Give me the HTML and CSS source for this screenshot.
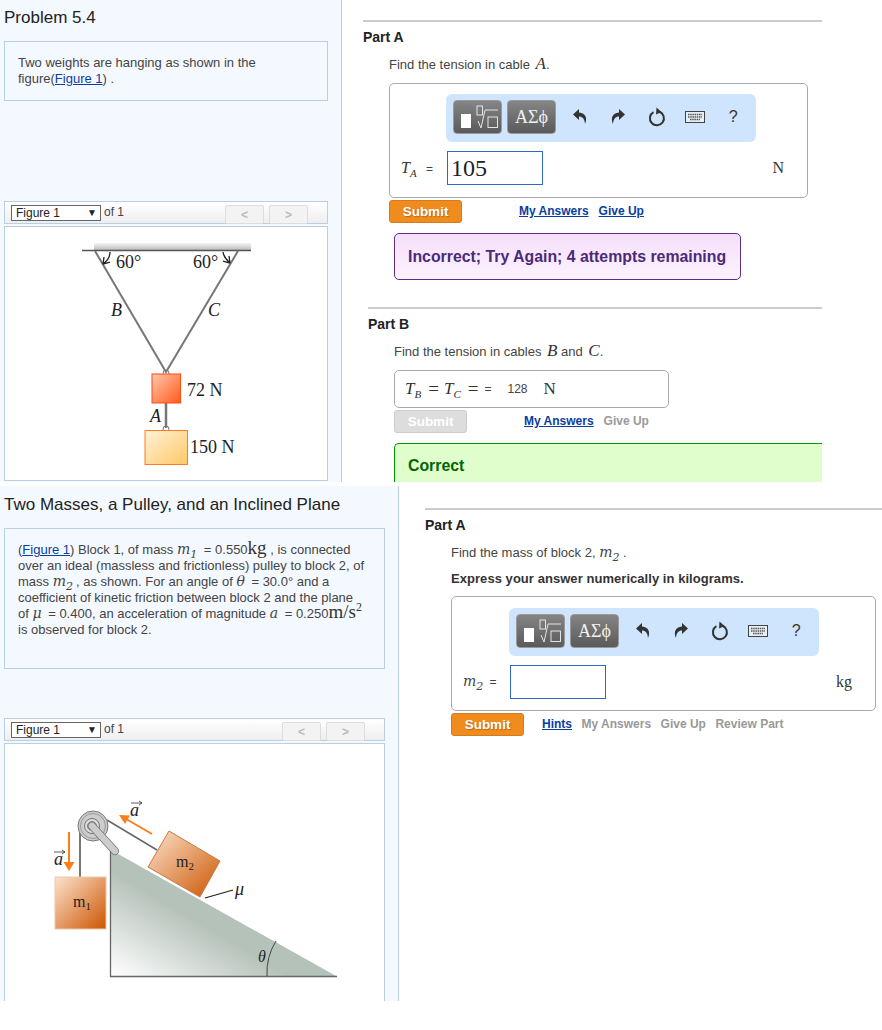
FILE: index.html
```html
<!DOCTYPE html>
<html lang="en">
<head>
    <meta charset="UTF-8" />
    <title>Problem 5.4</title>
    <link rel="stylesheet" href="styles.css">
</head>
<body>
    <!-- first problem -->
    <section class="problem problem-one">
        <div class="side">
            <h1 class="title">Problem 5.4</h1>
            <div class="intro">Two weights are hanging as shown in the<br>figure(<a href="#">Figure 1</a>) .</div>
            <div class="fig-bar">
                <div class="fig-select">Figure 1<span class="fig-arrow">▼</span></div>
                <span class="fig-of">of 1</span>
                <div class="fig-nav">
                    <button class="fig-btn">&lt;</button>
                    <button class="fig-btn">&gt;</button>
                </div>
            </div>
            <div class="fig-box">
                <svg class="fig-svg" width="322" height="253" viewBox="5 227 322 253">
                    <defs>
                        <linearGradient id="ceil" x1="0" y1="0" x2="0" y2="1">
                            <stop offset="0" stop-color="#f4f4f4"/>
                            <stop offset="1" stop-color="#bdbdbd"/>
                        </linearGradient>
                        <linearGradient id="redBox" x1="0" y1="0" x2="1" y2="1">
                            <stop offset="0" stop-color="#ffc9ac"/>
                            <stop offset="1" stop-color="#ff5a1c"/>
                        </linearGradient>
                        <linearGradient id="yelBox" x1="0" y1="0" x2="1" y2="1">
                            <stop offset="0" stop-color="#fff2da"/>
                            <stop offset="1" stop-color="#ffc866"/>
                        </linearGradient>
                    </defs>
                    <rect x="94" y="243" width="157" height="7" fill="url(#ceil)"/>
                    <line x1="82" y1="250.5" x2="251" y2="250.5" stroke="#555" stroke-width="1.5"/>
                    <path d="M95 251 L166 372 L238 251" fill="none" stroke="#777" stroke-width="2"/>
                    <line x1="166" y1="403" x2="166" y2="428" stroke="#777" stroke-width="2.500"/>
                    <circle cx="166" cy="373" r="3" fill="none" stroke="#777"/>
                    <circle cx="166" cy="429" r="3" fill="none" stroke="#777"/>
                    <path d="M110 252 Q110 259 103 264 M103 264 L104 257 M103 264 L110 262" fill="none" stroke="#222" stroke-width="1.3"/>
                    <path d="M223 252 Q224 258 230 263 M230 263 L229 256 M230 263 L223 261" fill="none" stroke="#222" stroke-width="1.3"/>
                    <rect x="152" y="374" width="28.500" height="29" fill="url(#redBox)" stroke="#ff4d10"/>
                    <rect x="145" y="430.500" width="42.500" height="34" fill="url(#yelBox)" stroke="#ff7a20"/>
                    <text class="fig-text" x="116" y="268">60°</text>
                    <text class="fig-text" x="193" y="268">60°</text>
                    <text class="fig-text fig-it" x="111" y="316">B</text>
                    <text class="fig-text fig-it" x="208" y="316">C</text>
                    <text class="fig-text" x="187" y="396">72 N</text>
                    <text class="fig-text fig-it" x="150" y="422">A</text>
                    <text class="fig-text" x="190" y="453">150 N</text>
                </svg>
            </div>
        </div>
        <div class="main">
            <div class="part part-first">
                <h2 class="part-name">Part A</h2>
                <div class="part-body">
                    <p class="question">Find the tension in cable <i class="math">A</i>.</p>
                    <div class="answer">
                        <div class="toolbar">
                            <button class="tool tool-dark">
                                <svg width="47" height="32" viewBox="0 0 47 32">
                                    <rect x="7" y="13" width="10" height="14" fill="#fff"/>
                                    <rect x="23" y="5" width="5.500" height="9" fill="none" stroke="#e4e4e4"/>
                                    <path d="M24 20 L27 27 L31 9 H44" fill="none" stroke="#e4e4e4"/>
                                    <rect x="34" y="16" width="9.500" height="10.500" fill="none" stroke="#e4e4e4"/>
                                </svg>
                            </button>
                            <button class="tool tool-dark tool-greek">ΑΣϕ</button>
                            <div class="tool-icons">
                                <svg width="16" height="18" viewBox="0 0 16 18"><path d="M7 1 L1 6.500 L7 12 V8.500 C10.500 8.500 12.500 10.500 13 16 C15.500 10.500 14 5 7 4.500 Z" fill="#333"/></svg>
                                <svg width="16" height="18" viewBox="0 0 16 18"><path d="M9 1 L15 6.500 L9 12 V8.500 C5.500 8.500 3.500 10.500 3 16 C0.500 10.500 2 5 9 4.500 Z" fill="#333"/></svg>
                                <svg width="18" height="20" viewBox="0 0 18 20"><path d="M11.500 4.800 A7 7 0 1 1 5.500 5.200" fill="none" stroke="#333" stroke-width="2"/><path d="M8.500 0.500 L13.500 5 L8 7.500 Z" fill="#333"/></svg>
                                <svg width="20" height="12" viewBox="0 0 20 12"><rect x="0.500" y="0.500" width="19" height="11" fill="#e8eef6" stroke="#444"/><path d="M3 3.500 H17 M3 6 H17 M5 8.500 H15" stroke="#555" stroke-width="1.500" stroke-dasharray="1.500 .7"/></svg>
                                <span class="tool-help">?</span>
                            </div>
                        </div>
                        <div class="answer-row">
                            <span class="answer-label"><i class="math-t">T<sub>A</sub></i> =</span>
                            <div class="answer-input">105</div>
                            <span class="answer-unit">N</span>
                        </div>
                    </div>
                    <div class="actions">
                        <button class="submit">Submit</button>
                        <div class="links links-wide">
                            <a href="#">My Answers</a>
                            <a href="#">Give Up</a>
                        </div>
                    </div>
                    <div class="feedback feedback-bad">Incorrect; Try Again; 4 attempts remaining</div>
                </div>
            </div>
            <div class="part part-second">
                <h2 class="part-name">Part B</h2>
                <div class="part-body">
                    <p class="question">Find the tension in cables <i class="math">B</i> and <i class="math">C</i>.</p>
                    <div class="answered">
                        <i class="math-big">T<sub>B</sub></i>
                        <span class="rel">=</span>
                        <i class="math-big">T<sub>C</sub></i>
                        <span class="rel rel-last">=</span>
                        <span class="answered-eq">=</span>
                        <span class="answered-val">128</span>
                        <span class="answered-unit">N</span>
                    </div>
                    <div class="actions">
                        <button class="submit submit-off">Submit</button>
                        <div class="links links-wide">
                            <a href="#">My Answers</a>
                            <span class="link-off">Give Up</span>
                        </div>
                    </div>
                    <div class="feedback feedback-good">Correct</div>
                </div>
            </div>
        </div>
    </section>

    <!-- second problem -->
    <section class="problem problem-two">
        <div class="side">
            <h1 class="title">Two Masses, a Pulley, and an Inclined Plane</h1>
            <div class="intro">(<a href="#">Figure 1</a>) Block 1, of mass <i class="math-m">m<sub>1</sub></i> = 0.550<span class="unit">kg</span> , is connected<br>over an ideal (massless and frictionless) pulley to block 2, of<br>mass <i class="math-m">m<sub>2</sub></i>, as shown. For an angle of <i class="math-m">θ</i> = 30.0° and a<br>coefficient of kinetic friction between block 2 and the plane<br>of <i class="math-m">μ</i> = 0.400, an acceleration of magnitude <i class="math-m">a</i> = 0.250<span class="unit">m/s<sup>2</sup></span><br>is observed for block 2.</div>
            <div class="fig-bar">
                <div class="fig-select">Figure 1<span class="fig-arrow">▼</span></div>
                <span class="fig-of">of 1</span>
                <div class="fig-nav">
                    <button class="fig-btn">&lt;</button>
                    <button class="fig-btn">&gt;</button>
                </div>
            </div>
            <div class="fig-box">
                <svg class="fig-svg" width="379" height="257" viewBox="5 744 379 257">
                    <defs>
                        <linearGradient id="block" x1="0" y1="0" x2="1" y2="1">
                            <stop offset="0" stop-color="#fde3cf"/>
                            <stop offset="1" stop-color="#cc5500"/>
                        </linearGradient>
                        <linearGradient id="ramp" gradientUnits="userSpaceOnUse" x1="111" y1="976" x2="157" y2="898">
                            <stop offset="0" stop-color="#ffffff"/>
                            <stop offset="1" stop-color="#b5c2ba"/>
                        </linearGradient>
                    </defs>
                    <path d="M111 850 L337 976.500 H111 Z" fill="url(#ramp)"/>
                    <path d="M110.500 850 V976.500 H337" fill="none" stroke="#666" stroke-width="1.300"/>
                    <line x1="80" y1="830" x2="80" y2="877" stroke="#777" stroke-width="2"/>
                    <line x1="107" y1="820" x2="157" y2="850" stroke="#666" stroke-width="1.500"/>
                    <circle cx="93" cy="826" r="15" fill="#ccc" stroke="#777"/>
                    <circle cx="93" cy="826" r="12.500" fill="none" stroke="#999"/>
                    <circle cx="92" cy="826" r="7.500" fill="#ddd" stroke="#777"/>
                    <circle cx="92" cy="826" r="4.500" fill="none" stroke="#777"/>
                    <line x1="92" y1="826" x2="115" y2="851" stroke="#777" stroke-width="8" stroke-linecap="round"/>
                    <line x1="92" y1="826" x2="115" y2="851" stroke="#ccc" stroke-width="6.500" stroke-linecap="round"/>
                    <rect x="55" y="877" width="51" height="52" fill="url(#block)" stroke="#ecc9ae"/>
                    <path d="M169 831 L220 861 L200 897 L148 867 Z" fill="url(#block)" stroke="#c97a40"/>
                    <path d="M69 832 V864" stroke="#fb7d1c" stroke-width="2"/>
                    <path d="M63.500 862 H74.500 L69 871 Z" fill="#fb7d1c"/>
                    <path d="M152 834 L127 819.500" stroke="#fb7d1c" stroke-width="2"/>
                    <path d="M119 815 L130 815.500 L125 824 Z" fill="#fb7d1c"/>
                    <path d="M205 898 L233 890" stroke="#222" stroke-width="1.200"/>
                    <path d="M276 941 Q266 957 267 976" fill="none" stroke="#444"/>
                    <text class="fig-text fig-small" x="73" y="907">m<tspan class="fig-sub" dy="3">1</tspan></text>
                    <text class="fig-text fig-small" x="176" y="867">m<tspan class="fig-sub" dy="3">2</tspan></text>
                    <text class="fig-text fig-it" x="54" y="865">a</text>
                    <text class="fig-text fig-it" x="130" y="816">a</text>
                    <path d="M54 852 H65 M62 850 L65 852 L62 854" fill="none" stroke="#333" stroke-width=".8"/>
                    <path d="M131 803 H142 M139 801 L142 803 L139 805" fill="none" stroke="#333" stroke-width=".8"/>
                    <text class="fig-text fig-it" x="235" y="895">μ</text>
                    <text class="fig-text fig-it fig-small" x="258" y="962">θ</text>
                </svg>
            </div>
        </div>
        <div class="main">
            <div class="part part-third">
                <h2 class="part-name">Part A</h2>
                <div class="part-body">
                    <p class="question">Find the mass of block 2, <i class="math-m">m<sub>2</sub></i> .</p>
                    <p class="express">Express your answer numerically in kilograms.</p>
                    <div class="answer">
                        <div class="toolbar">
                            <button class="tool tool-dark">
                                <svg width="47" height="32" viewBox="0 0 47 32">
                                    <rect x="7" y="13" width="10" height="14" fill="#fff"/>
                                    <rect x="23" y="5" width="5.500" height="9" fill="none" stroke="#e4e4e4"/>
                                    <path d="M24 20 L27 27 L31 9 H44" fill="none" stroke="#e4e4e4"/>
                                    <rect x="34" y="16" width="9.500" height="10.500" fill="none" stroke="#e4e4e4"/>
                                </svg>
                            </button>
                            <button class="tool tool-dark tool-greek">ΑΣϕ</button>
                            <div class="tool-icons">
                                <svg width="16" height="18" viewBox="0 0 16 18"><path d="M7 1 L1 6.500 L7 12 V8.500 C10.500 8.500 12.500 10.500 13 16 C15.500 10.500 14 5 7 4.500 Z" fill="#333"/></svg>
                                <svg width="16" height="18" viewBox="0 0 16 18"><path d="M9 1 L15 6.500 L9 12 V8.500 C5.500 8.500 3.500 10.500 3 16 C0.500 10.500 2 5 9 4.500 Z" fill="#333"/></svg>
                                <svg width="18" height="20" viewBox="0 0 18 20"><path d="M11.500 4.800 A7 7 0 1 1 5.500 5.200" fill="none" stroke="#333" stroke-width="2"/><path d="M8.500 0.500 L13.500 5 L8 7.500 Z" fill="#333"/></svg>
                                <svg width="20" height="12" viewBox="0 0 20 12"><rect x="0.500" y="0.500" width="19" height="11" fill="#e8eef6" stroke="#444"/><path d="M3 3.500 H17 M3 6 H17 M5 8.500 H15" stroke="#555" stroke-width="1.500" stroke-dasharray="1.500 .7"/></svg>
                                <span class="tool-help">?</span>
                            </div>
                        </div>
                        <div class="answer-row">
                            <span class="answer-label"><i class="math-m">m<sub>2</sub></i> =</span>
                            <div class="answer-input"></div>
                            <span class="answer-unit">kg</span>
                        </div>
                    </div>
                    <div class="actions">
                        <button class="submit">Submit</button>
                        <div class="links links-narrow">
                            <a href="#">Hints</a>
                            <span class="link-off">My Answers</span>
                            <span class="link-off">Give Up</span>
                            <span class="link-off">Review Part</span>
                        </div>
                    </div>
                </div>
            </div>
        </div>
    </section>
</body>
</html>
```

FILE: styles.css
```css
body {
    font-family: "Liberation Sans", Arial, sans-serif;
    font-size: 13px;
    color: #444;
    margin: 0;
    background-color: white;
}
button {
    font-family: inherit;
}
a {
    color: #0a3ea0;
}
.problem {
    display: flex;
}
.problem-one {
    width: 822px;
    height: 482px;
    overflow: hidden;
    margin-bottom: 4px;
}
.problem-two {
    width: 882px;
    height: 515px;
}
.side {
    flex: none;
    box-sizing: border-box;
    background-color: #f4f8ff;
    border-right: 1px solid #b9cfe4;
    padding: 0 13px 0 4px;
}
.problem-one .side {
    width: 342px;
}
.problem-two .side {
    width: 399px;
}
.title {
    font-size: 17px;
    font-weight: normal;
    color: #222;
    margin: 0;
    padding-top: 8px;
    height: 33px;
    line-height: 20px;
    box-sizing: border-box;
}
.problem-two .title {
    padding-top: 9px;
}
.intro {
    box-sizing: border-box;
    height: 60px;
    margin-bottom: 100px;
    padding: 13px 4px 0 13px;
    border: 1px solid #b9cfe4;
    line-height: 16px;
    white-space: nowrap;
}
.problem-one .intro {
    margin-top: 8px;
}
.problem-two .intro {
    height: 141px;
    margin-top: 9px;
    margin-bottom: 49px;
}
.intro .math-m {
    margin-right: 3px;
}
.unit {
    font-family: "Liberation Serif", serif;
    font-size: 19px;
    line-height: 0;
    color: #333;
}
.unit sup {
    font-size: 12px;
    line-height: 0;
}
.fig-bar {
    box-sizing: border-box;
    height: 23px;
    display: flex;
    align-items: flex-start;
    padding: 3px 6px 0 6px;
    border: 1px solid #b9cfe4;
    background: linear-gradient(#fff, #eee);
    font-size: 12px;
}
.fig-select {
    box-sizing: border-box;
    width: 90px;
    height: 16px;
    padding-left: 4px;
    display: flex;
    justify-content: space-between;
    background-color: white;
    border: 1px solid #666;
    color: #222;
    line-height: 14px;
}
.fig-arrow {
    font-size: 10px;
    margin-right: 3px;
}
.fig-of {
    margin-left: 3px;
    line-height: 15px;
}
.fig-nav {
    margin-left: auto;
    margin-right: 13px;
    display: flex;
    gap: 5px;
}
.fig-btn {
    width: 39px;
    height: 19px;
    padding: 0;
    background-color: #f3f3f3;
    border: 1px solid #ddd;
    border-radius: 2px;
    color: #bbb;
    font-weight: bold;
    font-size: 12px;
}
.fig-box {
    box-sizing: border-box;
    margin-top: 2px;
    height: 255px;
    background-color: white;
    border: 1px solid #b9cfe4;
}
.problem-two .fig-box {
    height: 258px;
    border-bottom: none;
}
.fig-svg {
    display: block;
}
.fig-text {
    font-family: "Liberation Serif", serif;
    font-size: 18px;
    fill: #222;
}
.fig-it {
    font-style: italic;
}
.fig-small {
    font-size: 16px;
}
.fig-sub {
    font-size: 11px;
}
.main {
    flex: 1;
    min-width: 0;
}
.part {
    border-top: 2px solid #ccc;
}
.part-first {
    margin: 20px 0 0 21px;
    height: 285px;
}
.part-second {
    margin-left: 26px;
}
.part-third {
    margin: 22px 0 0 26px;
}
.part-name {
    font-size: 14px;
    font-weight: bold;
    color: #222;
    margin: 8px 0 0 0;
    line-height: 15px;
}
.part-body {
    padding-left: 26px;
}
.question {
    margin: 12px 0 0 0;
    line-height: 16px;
}
.express {
    margin: 10px 0 0 0;
    line-height: 16px;
    font-weight: bold;
    color: #333;
    letter-spacing: 0.05px;
}
.math {
    font-family: "Liberation Serif", serif;
    font-size: 17px;
    line-height: 0;
    color: #333;
    margin-left: 2px;
}
.math-m {
    font-family: "DejaVu Serif", serif;
    font-size: 14px;
    line-height: 0;
    color: #444;
}
.math-m sub, .math-t sub, .math-big sub {
    font-size: 11px;
    line-height: 0;
}
.answer {
    box-sizing: border-box;
    width: 419px;
    height: 115px;
    margin-top: 10px;
    padding: 10px 0 0 11px;
    background-color: white;
    border: 1px solid #aaa;
    border-radius: 5px;
}
.part-third .answer {
    width: 425px;
    margin-top: 9px;
    padding-top: 11px;
}
.toolbar {
    box-sizing: border-box;
    width: 310px;
    height: 48px;
    margin-left: 45px;
    padding: 6px 0 6px 7px;
    display: flex;
    gap: 5px;
    background-color: #cfe4fd;
    border-radius: 6px;
}
.part-third .toolbar {
    margin-left: 46px;
}
.tool {
    flex: none;
    box-sizing: border-box;
    width: 49px;
    height: 34px;
    padding: 0;
    border: 1px solid #999;
    border-radius: 4px;
}
.tool-dark {
    background: linear-gradient(#858585, #5a5a5a);
}
.tool svg {
    display: block;
}
.tool-greek {
    font-family: "Liberation Serif", serif;
    font-size: 18px;
    color: #f0f0f0;
}
.tool-icons {
    flex: none;
    display: grid;
    grid-template-columns: repeat(5, 38.25px);
    justify-items: center;
    align-items: center;
    height: 34px;
}
.tool-help {
    font-size: 16px;
    color: #333;
}
.answer-row {
    display: flex;
    align-items: center;
    margin-top: 9px;
    height: 34px;
}
.answer-label {
    width: 46px;
    font-size: 12px;
}
.part-third .answer-label {
    width: 47px;
}
.answer-label .math-t {
    margin-right: 6px;
}
.answer-label .math-m {
    margin-right: 3px;
}
.math-t {
    font-family: "Liberation Serif", serif;
    font-size: 16px;
    color: #333;
}
.answer-input {
    box-sizing: border-box;
    width: 96px;
    height: 34px;
    padding-left: 3px;
    border: 1px solid #2f66c8;
    font-family: "Liberation Serif", serif;
    font-size: 24px;
    line-height: 32px;
    color: #222;
}
.answer-unit {
    margin-left: auto;
    margin-right: 23px;
    font-family: "Liberation Serif", serif;
    font-size: 16px;
    color: #333;
}
.actions {
    display: flex;
    align-items: center;
    margin-top: 1px;
    height: 24px;
}
.submit {
    width: 73px;
    height: 23px;
    padding: 0;
    background-color: #f08c1e;
    border: 1px solid #d47b1c;
    border-radius: 3px;
    color: white;
    font-size: 13.500px;
    font-weight: bold;
    text-shadow: 1px 1px 1px rgba(0, 0, 0, 0.25);
}
.submit-off {
    background-color: #ddd;
    border-color: #ccc;
    text-shadow: none;
}
.links {
    display: flex;
    gap: 10px;
    font-size: 12px;
    font-weight: bold;
}
.links-wide {
    margin-left: 57px;
}
.links-narrow {
    margin-left: 18px;
    gap: 9.500px;
}
.link-off {
    color: #999;
}
.feedback {
    box-sizing: border-box;
    font-size: 15.850px;
    font-weight: bold;
}
.feedback-bad {
    width: 347px;
    height: 47px;
    margin: 10px 0 0 5px;
    padding: 14px 0 0 13px;
    background: linear-gradient(#f5dffb, #fdf2ff);
    border: 1px solid #5f2d85;
    border-radius: 5px;
    color: #4b2a78;
}
.feedback-good {
    height: 60px;
    margin-top: 10px;
    padding: 13px 0 0 13px;
    background-color: #e0fdcc;
    border: 1px solid #090;
    border-right: none;
    border-radius: 5px 0 0 0;
    color: #060;
}
.answered {
    box-sizing: border-box;
    width: 275px;
    height: 38px;
    margin-top: 10px;
    padding-left: 10px;
    display: flex;
    align-items: center;
    background-color: white;
    border: 1px solid #aaa;
    border-radius: 5px;
    font-size: 12px;
}
.math-big {
    font-family: "Liberation Serif", serif;
    font-size: 17px;
    color: #333;
}
.rel {
    font-family: "Liberation Serif", serif;
    font-size: 19px;
    color: #333;
    margin: 0 5px 0 7px;
}
.rel-last {
    margin-right: 6px;
}
.answered-val {
    margin-left: 16px;
}
.answered-unit {
    margin-left: 16px;
    font-family: "Liberation Serif", serif;
    font-size: 17px;
    color: #333;
}
```
